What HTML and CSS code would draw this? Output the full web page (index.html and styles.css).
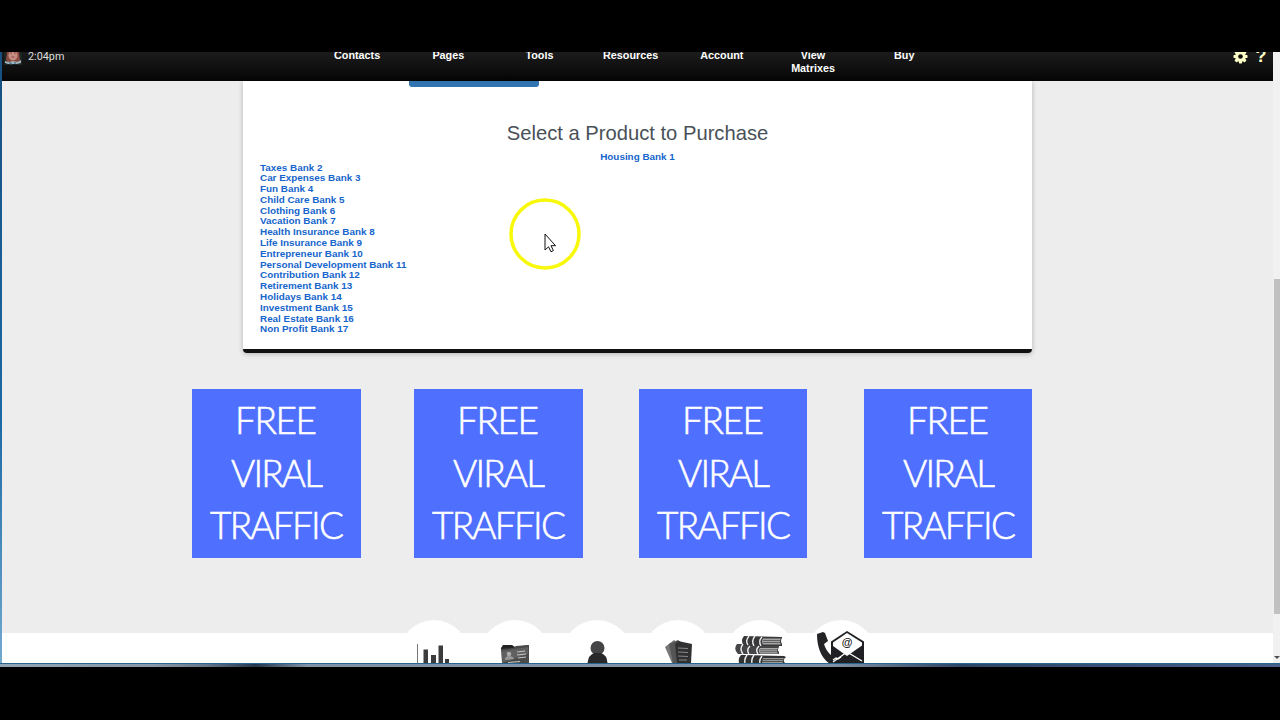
FILE: index.html
```html
<!DOCTYPE html>
<html lang="en">
<head>
    <meta charset="UTF-8">
    <meta name="viewport" content="width=device-width, initial-scale=1.0">
    <title>Select a Product to Purchase</title>
    <link rel="stylesheet" href="styles.css">
</head>
<body>

    <div class="screen">
        <div class="window-edge"></div>

        <div class="page">
            <nav class="navbar">
                <div class="nav-left">
                    <svg class="avatar" viewBox="0 0 18 13">
                        <rect width="18" height="13" fill="#1d2523"/>
                        <path d="M3 0h12l1 8-3 3H5L2 8z" fill="#8c4b40"/>
                        <ellipse cx="9" cy="3.5" rx="4.5" ry="5" fill="#c58d82"/>
                        <path d="M6 1h2M10 1h2M7.5 5h3" stroke="#874b50" stroke-width="1"/>
                        <path d="M1 9l4 1 4-1 4 1 4-2v3l-4 1H4l-3-1z" fill="#9fb2b9"/>
                        <path d="M5 11h2v2M11 10v2" stroke="#39678a" fill="none"/>
                    </svg>
                    <span class="clock">2:04pm</span>
                </div>
                <div class="nav-menu">
                    <a>Contacts</a>
                    <a>Pages</a>
                    <a>Tools</a>
                    <a>Resources</a>
                    <a>Account</a>
                    <a>View<br>Matrixes</a>
                    <a>Buy</a>
                </div>
                <div class="nav-right">
                    <svg class="gear" viewBox="0 0 16 16">
                        <g fill="#ffffc8">
                            <rect x="6.3" y="0.5" width="3.4" height="15" rx="0.8"/>
                            <rect x="6.3" y="0.5" width="3.4" height="15" rx="0.8" transform="rotate(45 8 8)"/>
                            <rect x="6.3" y="0.5" width="3.4" height="15" rx="0.8" transform="rotate(90 8 8)"/>
                            <rect x="6.3" y="0.5" width="3.4" height="15" rx="0.8" transform="rotate(135 8 8)"/>
                            <circle cx="8" cy="8" r="5.7"/>
                        </g>
                        <circle cx="8" cy="8" r="2.5" fill="#111"/>
                    </svg>
                    <span class="help">?</span>
                </div>
            </nav>

            <div class="card">
                <div class="card-button"></div>
                <h2 class="card-title">Select a Product to Purchase</h2>
                <a class="first-product">Housing Bank 1</a>
                <ul class="product-list">
                    <li><a>Taxes Bank 2</a></li>
                    <li><a>Car Expenses Bank 3</a></li>
                    <li><a>Fun Bank 4</a></li>
                    <li><a>Child Care Bank 5</a></li>
                    <li><a>Clothing Bank 6</a></li>
                    <li><a>Vacation Bank 7</a></li>
                    <li><a>Health Insurance Bank 8</a></li>
                    <li><a>Life Insurance Bank 9</a></li>
                    <li><a>Entrepreneur Bank 10</a></li>
                    <li><a>Personal Development Bank 11</a></li>
                    <li><a>Contribution Bank 12</a></li>
                    <li><a>Retirement Bank 13</a></li>
                    <li><a>Holidays Bank 14</a></li>
                    <li><a>Investment Bank 15</a></li>
                    <li><a>Real Estate Bank 16</a></li>
                    <li><a>Non Profit Bank 17</a></li>
                </ul>
            </div>

            <div class="banners">
                <svg class="banner" viewBox="0 0 168.5 168.5">
                    <text x="43" y="45" textLength="82">FREE</text>
                    <text x="39" y="97.5" textLength="92">VIRAL</text>
                    <text x="18" y="150" textLength="134">TRAFFIC</text>
                </svg>
                <svg class="banner" viewBox="0 0 168.5 168.5">
                    <text x="43" y="45" textLength="82">FREE</text>
                    <text x="39" y="97.5" textLength="92">VIRAL</text>
                    <text x="18" y="150" textLength="134">TRAFFIC</text>
                </svg>
                <svg class="banner" viewBox="0 0 168.5 168.5">
                    <text x="43" y="45" textLength="82">FREE</text>
                    <text x="39" y="97.5" textLength="92">VIRAL</text>
                    <text x="18" y="150" textLength="134">TRAFFIC</text>
                </svg>
                <svg class="banner" viewBox="0 0 168.5 168.5">
                    <text x="43" y="45" textLength="82">FREE</text>
                    <text x="39" y="97.5" textLength="92">VIRAL</text>
                    <text x="18" y="150" textLength="134">TRAFFIC</text>
                </svg>
            </div>

            <div class="footer">
                <!-- stats -->
                <a class="dock-item">
                    <svg viewBox="0 0 70 43">
                        <path d="M18.5 24v19" stroke="#777" stroke-width="1"/>
                        <path d="M24.5 29.5H29V43h-4.5zM32 35h5v8h-5zM39.5 25.5H44V43h-4.500zM46 39h4v4h-4z" fill="#3c3c3f"/>
                    </svg>
                </a>
                <!-- contacts folder -->
                <a class="dock-item">
                    <svg viewBox="0 0 70 43">
                        <path d="M21 28l2-3h9l3 2 14-2v5H21z" fill="#222"/>
                        <path d="M21 29l12-1 3-2 13-1v18H22z" fill="#4a4a4a"/>
                        <path d="M22 31l26-4v7L22 43z" fill="#606060"/>
                        <circle cx="29" cy="34" r="2.3" fill="#aaa"/>
                        <path d="M25 40q0-4 4-4t5 3z" fill="#999"/>
                        <path d="M37 32l8-1M37 35l9-1M38 38l8-1M28 42.5l12-1" stroke="#c5c5c5" stroke-width="1"/>
                    </svg>
                </a>
                <!-- profile -->
                <a class="dock-item">
                    <svg viewBox="0 0 70 43">
                        <circle cx="35.5" cy="28" r="7" fill="#454547"/>
                        <path d="M25.5 43q1-8 6.500-10h7q6 2 6.500 10z" fill="#29292b"/>
                    </svg>
                </a>
                <!-- documents -->
                <a class="dock-item">
                    <svg viewBox="0 0 70 43">
                        <path d="M22 27l9-7 4 3v20h-6z" fill="#777"/>
                        <path d="M26 24l9-4 4 3-3 20h-6z" fill="#555"/>
                        <path d="M32 24l3-3 14 3-1 19H34z" fill="#303032"/>
                        <path d="M35 28l10 .5M35 32l10 .5M35 36l10 .5M36 40h8" stroke="#888" stroke-width="1.2"/>
                    </svg>
                </a>
                <!-- books -->
                <a class="dock-item">
                    <svg viewBox="0 0 70 43">
                        <path d="M19 16q-4 5 0 10h38v-2q-2-3 0-6v-1z" fill="#38383a"/>
                        <path d="M38 18.500h18q-2 3 0 6H38q-2-3 0-6" fill="#a5a5a5"/>
                        <path d="M38 20.500h18M38 22.500h18" stroke="#444" stroke-width=".7"/>
                        <path d="M24 16q-4 5-1 9M30 16q-4 5-1 10M37 17q-4 4-1 9" stroke="#eee" stroke-width="1.4" fill="none"/>
                        <path d="M12 24q-4 5 1 10h41v-2q-2-2 0-5v-1H20l-2-2z" fill="#454547"/>
                        <path d="M35 28h18q-2 3 0 5.500H35q-2-3 0-5.500" fill="#aaa"/>
                        <path d="M35 29.800h18M35 31.700h18" stroke="#444" stroke-width=".7"/>
                        <path d="M18 24q-4 5 0 10M25 26q-4 4-1 8M34 26q-4 4-1 8" stroke="#eee" stroke-width="1.4" fill="none"/>
                        <path d="M16 35q-3 3-2 8h46q-3-3 1-6l-2-1-40-1z" fill="#333"/>
                        <path d="M38 38h21q-2 2-1 5H37z" fill="#999"/>
                        <path d="M38 39.500h20M37 41.500h21" stroke="#333" stroke-width=".7"/>
                        <path d="M22 35q-3 4-2 8M29 35q-3 4-2 8M37 36q-3 4-2 7" stroke="#eee" stroke-width="1.4" fill="none"/>
                    </svg>
                </a>
                <!-- contact us -->
                <a class="dock-item">
                    <svg viewBox="0 0 70 43">
                        <path d="M11 14l6-2 2 1 3 8-4 3q2 7 7 11l5-1 4 7-3 3h-7Q11 35 11 14" fill="#242427"/>
                        <path d="M25 21.500L41 11l17 10.500V43H25z" fill="#202024"/>
                        <path d="M27 22.500L41 13l15 9.500v3L41 36 27 26z" fill="#fff"/>
                        <path d="M27 42l14-10 15 9" fill="none" stroke="#fff" stroke-width="1.3"/>
                        <path d="M27 40l3-2 2 1 3-2" stroke="#fff" stroke-width="1.5" fill="none"/>
                        <text class="at-sign" x="41" y="26">@</text>
                    </svg>
                </a>
            </div>

            <svg class="pointer" viewBox="0 0 76 76">
                <circle cx="38" cy="38" r="34" fill="none" stroke="#f8f80a" stroke-width="3.5"/>
                <path d="M38 38v16l3.500-3.200 2.500 5 2.400-1.200-2.400-4.900h4.500z" fill="#fff" stroke="#111" stroke-width="1"/>
            </svg>
        </div>

        <div class="scrollbar">
            <div class="scroll-thumb"></div>
            <div class="scroll-arrow"></div>
        </div>
    </div>
    <div class="taskbar"></div>

</body>
</html>
```

FILE: styles.css
```css
:root {
    --page-bg: #ededed;
    --link-color: #1665cc;
    --banner-color: #4f6fff;
    --main-font: "Liberation Sans", Arial, sans-serif;
}

* {
    box-sizing: border-box;
}

body {
    margin: 0;
    padding-top: 52px;
    height: 720px;
    background: #000;
    font-family: var(--main-font);
    overflow: hidden;
}

.screen {
    display: flex;
    height: 611px;
}

.window-edge {
    width: 1.5px;
    background: linear-gradient(#174f80, #1c69a5 60%, #71a9cf);
}

.page {
    position: relative;
    display: flex;
    flex-direction: column;
    width: 1272px;
    background: var(--page-bg);
    overflow: hidden;
}

/* Top navigation */
.navbar {
    display: grid;
    grid-template-columns: 310px 640px 1fr;
    flex: none;
    height: 29px;
    background: linear-gradient(#1c1c1c, #050505);
    color: #fff;
    overflow: hidden;
}

.nav-left {
    display: flex;
    align-items: flex-start;
    gap: 6px;
    padding-left: 2.5px;
}

.avatar {
    width: 18px;
    height: 13px;
}

.clock {
    margin-top: -2.5px;
    font-family: Roboto, sans-serif;
    font-size: 10.8px;
    line-height: 14px;
    color: #ddd;
}

.nav-menu {
    display: grid;
    grid-template-columns: repeat(7, 91.2px);
    margin-top: -3px;
    font-size: 10.8px;
    font-weight: bold;
    line-height: 13px;
    text-align: center;
}

.nav-right {
    display: flex;
    justify-content: flex-end;
    gap: 8px;
    margin-top: -3px;
    padding-right: 6.5px;
    color: #ffffc8;
}

.gear {
    width: 15px;
    height: 15px;
}

.help {
    font-size: 18px;
    font-weight: bold;
    line-height: 15px;
}

/* Product card */
.card {
    display: flex;
    flex-direction: column;
    flex: none;
    width: 789px;
    height: 271.5px;
    margin-left: 241.5px;
    padding: 0 17px;
    background: #fff;
    border-bottom: 4px solid #111;
    border-radius: 0 0 4px 4px;
    box-shadow: 0 1px 5px rgba(0, 0, 0, 0.25);
}

.card-button {
    width: 130px;
    height: 6px;
    margin-left: 149px;
    background: #3175b0;
    border-radius: 0 0 3px 3px;
}

.card-title {
    margin: 34px 0 0;
    font-size: 20.2px;
    font-weight: normal;
    line-height: 24px;
    color: #495057;
    text-align: center;
}

.first-product {
    margin-top: 6px;
    font-size: 9.9px;
    font-weight: bold;
    line-height: 11px;
    color: var(--link-color);
    text-align: center;
}

.product-list {
    margin: 0.5px 0 0;
    padding: 0;
    list-style: none;
    font-size: 9.9px;
    font-weight: bold;
    line-height: 10.8px;
    color: var(--link-color);
}

/* Banner row */
.banners {
    display: grid;
    grid-template-columns: 222px 224.7px 225px 168.5px;
    flex: none;
    margin: 36.5px 0 0 190.5px;
}

.banner {
    width: 168.5px;
    height: 168.5px;
    background: var(--banner-color);
}

.banner text {
    font-family: Lato, sans-serif;
    font-size: 37px;
    font-weight: 300;
    fill: #fff;
    stroke: #fff;
    stroke-width: 0.6px;
}

/* Bottom dock */
.footer {
    display: flex;
    flex: none;
    gap: 11.4px;
    height: 43.5px;
    margin-top: 62px;
    padding-left: 397.5px;
    background: linear-gradient(var(--page-bg) 13px, #fff 13px);
    overflow: hidden;
}

.dock-item {
    width: 70px;
    height: 70px;
    background: #fff;
    border-radius: 50%;
}

.dock-item svg {
    display: block;
    width: 70px;
    height: 43px;
}

.at-sign {
    font-size: 11px;
    font-weight: bold;
    text-anchor: middle;
    fill: #222;
}

/* Highlighted mouse pointer */
.pointer {
    position: absolute;
    top: 144px;
    left: 505.5px;
    width: 76px;
    height: 76px;
}

/* Scrollbar */
.scrollbar {
    display: flex;
    flex-direction: column;
    flex: 1;
    padding: 227px 0 4px 1px;
    background: #f1f1f1;
}

.scroll-thumb {
    height: 335px;
    background: #c1c1c1;
}

.scroll-arrow {
    align-self: flex-end;
    margin-top: auto;
    border: 3px solid transparent;
    border-top-color: #505050;
    border-bottom: 0;
}

.taskbar {
    height: 4px;
    background: linear-gradient(90deg, #8fa5b5, #8798a9 12%, #66788c 16%, #24384d 20%, #8093a8 24%, #8093a8 65%, #2c4667 75%, #46618a);
    border-top: 1px solid #28648c;
}
```
